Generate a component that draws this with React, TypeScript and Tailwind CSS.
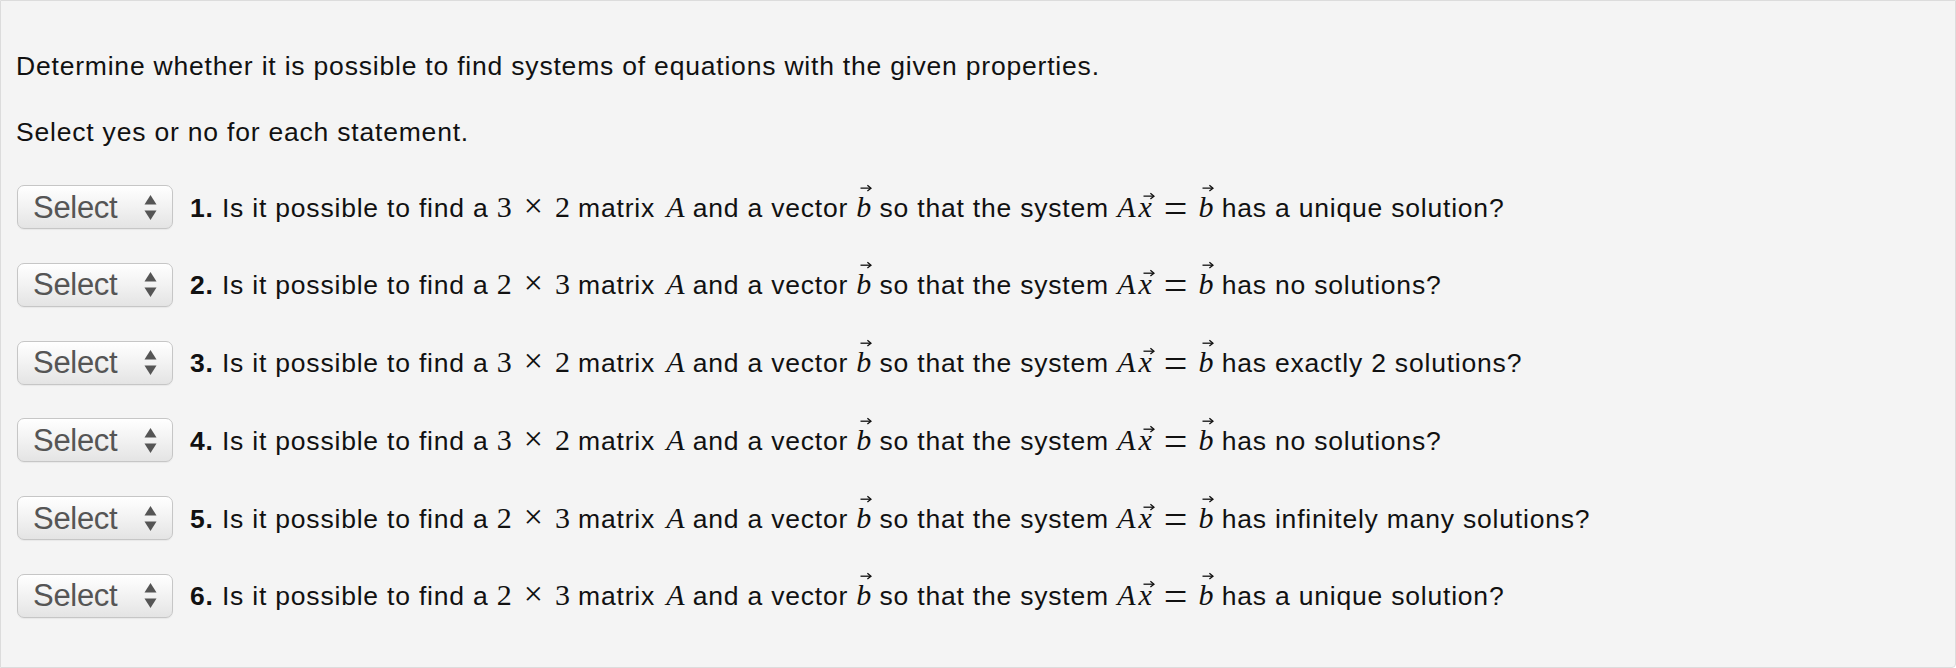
const questions = [
  { n: 1, m: '3', k: '2', tail: 'has a unique solution?' },
  { n: 2, m: '2', k: '3', tail: 'has no solutions?' },
  { n: 3, m: '3', k: '2', tail: 'has exactly 2 solutions?' },
  { n: 4, m: '3', k: '2', tail: 'has no solutions?' },
  { n: 5, m: '2', k: '3', tail: 'has infinitely many solutions?' },
  { n: 6, m: '2', k: '3', tail: 'has a unique solution?' },
]

// vector letter with a small arrow on top (b sits higher than x)
function Vec({ letter, tall }: { letter: string; tall?: boolean }) {
  return (
    <span className="relative inline-block italic">
      {letter}
      <svg
        className={tall ? 'absolute left-[4px] top-[-9px]' : 'absolute left-[5px] top-[-1px]'}
        width="12"
        height="8"
        viewBox="0 0 12 8"
        fill="none"
      >
        <path d="M0.5 4.2 H10.5" stroke="#111" strokeWidth="1.3" />
        <path d="M7.4 1.2 L11 4.2 L7.4 7" stroke="#111" strokeWidth="1.3" />
      </svg>
    </span>
  )
}

function M({ children }: { children: React.ReactNode }) {
  return (
    <span className="font-['Liberation_Serif',serif] text-[30px] tracking-normal">{children}</span>
  )
}

function SelectBox() {
  return (
    <div className="w-[156px] h-[44px] shrink-0 rounded-[7px] border border-[#c6c6c6] bg-gradient-to-b from-[#ffffff] via-[#f2f2f2] to-[#e4e4e4] shadow-[inset_0_1px_0_#fff,0_1px_1px_rgba(0,0,0,0.05)] flex items-center justify-between pl-[15px] pr-[15px]">
      <span className="text-[31px] leading-none text-[#555] tracking-[-0.3px]">Select</span>
      <svg width="13" height="27" viewBox="0 0 13 27">
        <path d="M6.5 1 L12.5 10.5 H0.5 Z" fill="#555" />
        <path d="M0.5 16.5 H12.5 L6.5 26 Z" fill="#555" />
      </svg>
    </div>
  )
}

export default function App() {
  return (
    <div className="w-[1956px] h-[668px] bg-[#f4f4f4] border border-[#dcdcdc] rounded-br-[4px] font-['Liberation_Sans',Arial,sans-serif] text-[#111] overflow-hidden">
      <p className="mt-[51px] ml-[15px] text-[26.5px] leading-[28px] tracking-[0.8px]">
        Determine whether it is possible to find systems of equations with the given properties.
      </p>
      <p className="mt-[38px] ml-[15px] text-[26.5px] leading-[28px] tracking-[0.8px]">
        Select yes or no for each statement.
      </p>
      <div className="mt-[39px] ml-[16px] flex flex-col gap-[33.8px]">
        {questions.map((q) => (
          <div key={q.n} className="flex items-center gap-[17px]">
            <SelectBox />
            <p className="text-[26.5px] leading-[28px] tracking-[0.8px] whitespace-nowrap">
              <b>{q.n}.</b> Is it possible to find a{' '}
              <M>
                {q.m}
                <span className="text-[34px] leading-[0] ml-[12px] mr-[12px]">×</span>
                {q.k}
              </M>{' '}
              matrix{' '}
              <M>
                <i className="ml-[3px]">A</i>
              </M>{' '}
              and a vector{' '}
              <M>
                <Vec letter="b" tall />
              </M>{' '}
              so that the system{' '}
              <M>
                <i className="mr-[3px]">A</i>
                <Vec letter="x" />
                <span className="text-[42px] leading-[0] align-[-5px] ml-[12px] mr-[11px]">=</span>
                <Vec letter="b" tall />
              </M>{' '}
              {q.tail}
            </p>
          </div>
        ))}
      </div>
    </div>
  )
}
